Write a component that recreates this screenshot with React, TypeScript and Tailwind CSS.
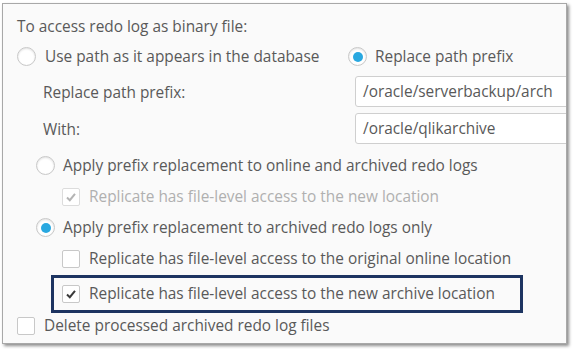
import type { ReactNode } from 'react';

const font = { fontFamily: '"Open Sans", "Noto Sans", sans-serif' };

function Radio({ checked }: { checked?: boolean }) {
  return (
    <span className="flex h-[19px] w-[19px] shrink-0 items-center justify-center rounded-full border border-[#c8c8c8] bg-white shadow-[inset_0_1px_2px_rgba(0,0,0,0.12)]">
      {checked && <span className="h-[10px] w-[10px] rounded-full bg-[#29a8e0]" />}
    </span>
  );
}

function Checkbox({ checked, disabled }: { checked?: boolean; disabled?: boolean }) {
  return (
    <span
      className={`flex h-[18px] w-[18px] shrink-0 items-center justify-center rounded-[2px] border bg-white ${
        disabled ? 'border-[#dcdcdc]' : 'border-[#c8c8c8]'
      }`}
    >
      {checked && (
        <svg width="12" height="12" viewBox="0 0 12 12">
          <path
            d="M2 6.5 L4.8 9.2 L10 2.8"
            fill="none"
            stroke={disabled ? '#b4b4b4' : '#3a3a3a'}
            strokeWidth="2"
          />
        </svg>
      )}
    </span>
  );
}

function Row({ className, children }: { className?: string; children: ReactNode }) {
  return <div className={`flex items-center ${className ?? 'h-[30px]'}`}>{children}</div>;
}

export default function App() {
  return (
    <div className="h-[349px] w-[574px] bg-white pl-[2px] pt-[3px]" style={font}>
      <div className="h-[341px] w-[565px] overflow-hidden border border-[#a8a8a8] bg-[#fafafa] pl-[14px] pt-[8px] text-[15.4px] text-[#595959] shadow-[2px_2px_3px_rgba(0,0,0,0.45)]">
        <Row>To access redo log as binary file:</Row>

        <Row>
          <div className="flex w-[331px] shrink-0 items-center gap-[9px]">
            <Radio />
            <span>Use path as it appears in the database</span>
          </div>
          <div className="flex shrink-0 items-center gap-[8px]">
            <Radio checked />
            <span>Replace path prefix</span>
          </div>
        </Row>

        <div className="mt-[4px] flex h-[31px] items-center pl-[26px]">
          <span className="w-[312px] shrink-0 pt-[3px]">Replace path prefix:</span>
          <div className="flex h-[31px] w-[260px] shrink-0 items-center rounded-[3px] border border-[#cfcfcf] bg-white pl-[7px]">
            /oracle/serverbackup/arch
          </div>
        </div>

        <div className="mt-[6px] flex h-[31px] items-center pl-[26px]">
          <span className="w-[312px] shrink-0 pt-[3px]">With:</span>
          <div className="flex h-[31px] w-[260px] shrink-0 items-center rounded-[3px] border border-[#cfcfcf] bg-white pl-[7px]">
            /oracle/qlikarchive
          </div>
        </div>

        <Row className="mt-[6px] h-[31px] gap-[8px] pl-[19px]">
          <Radio />
          <span>Apply prefix replacement to online and archived redo logs</span>
        </Row>

        <Row className="h-[31px] gap-[9px] pl-[45px]">
          <Checkbox checked disabled />
          <span className="text-[#b0b0b0]">Replicate has file-level access to the new location</span>
        </Row>

        <Row className="h-[31px] gap-[8px] pl-[19px]">
          <Radio checked />
          <span>Apply prefix replacement to archived redo logs only</span>
        </Row>

        <Row className="h-[31px] gap-[9px] pl-[45px]">
          <Checkbox />
          <span>Replicate has file-level access to the original online location</span>
        </Row>

        <div className="ml-[34px] mt-[1px] flex h-[38px] w-[472px] items-center gap-[9px] border-[3px] border-[#1d3461] pl-[8px]">
          <Checkbox checked />
          <span>Replicate has file-level access to the new archive location</span>
        </div>

        <div className="flex h-[26px] items-center gap-[9px]">
          <Checkbox />
          <span>Delete processed archived redo log files</span>
        </div>
      </div>
    </div>
  );
}
